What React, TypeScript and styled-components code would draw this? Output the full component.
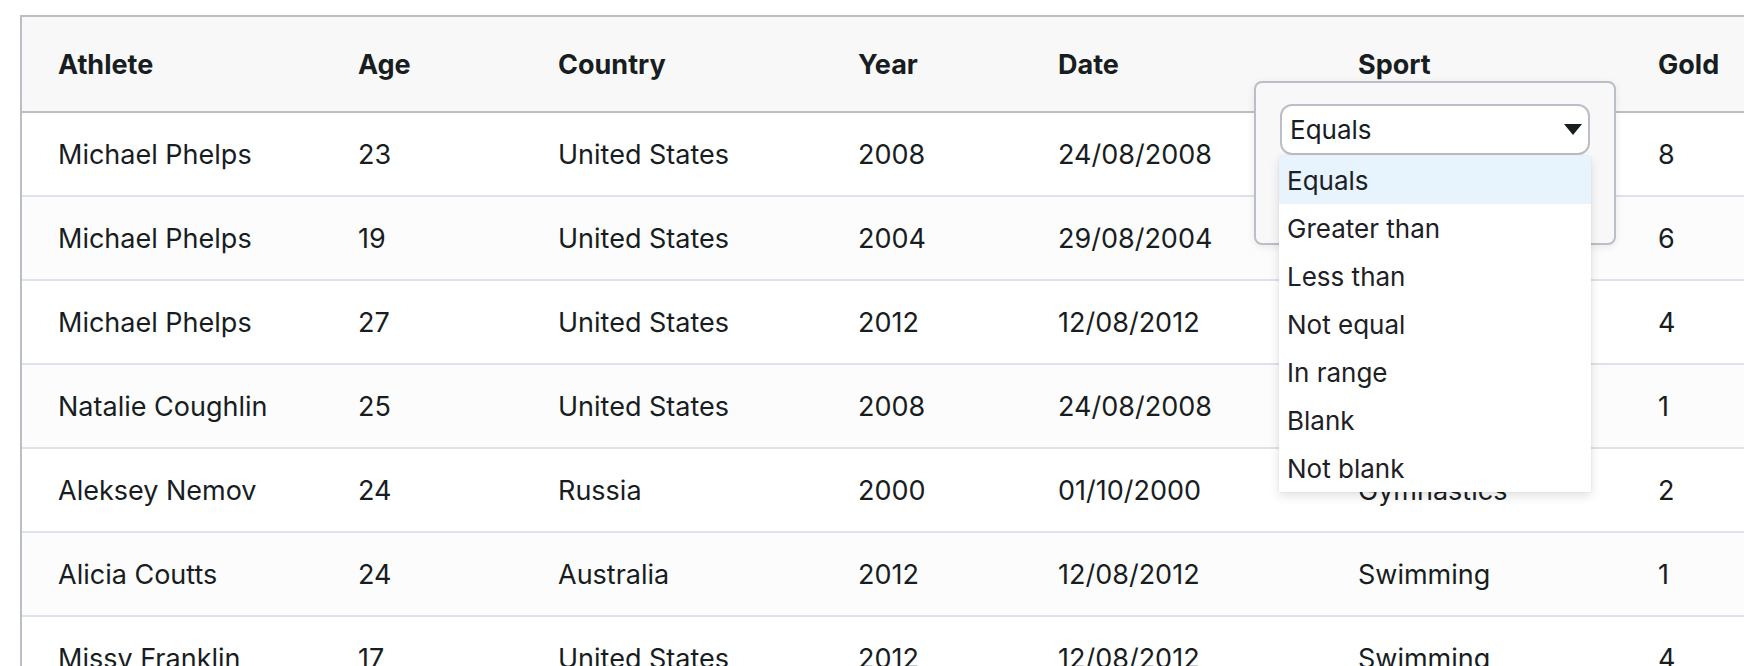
import styled, { createGlobalStyle } from "styled-components";

const GlobalStyle = createGlobalStyle`
  html, body {
    margin: 0;
    padding: 0;
    background: #ffffff;
    overflow: hidden;
  }
  body {
    font-family: Inter, "Noto Sans", "Liberation Sans", sans-serif;
    color: #181d1f;
  }
`;

const Page = styled.div`
  padding: 15px 0 0 20px;
  width: 1744px;
  height: 666px;
  box-sizing: border-box;
  overflow: hidden;
`;

const Grid = styled.div`
  position: relative;
  width: 1900px;
  border: 2px solid #babfc7;
  border-right: none;
  background: #ffffff;
`;

const HeaderRow = styled.div`
  display: flex;
  height: 94px;
  background: #f8f8f8;
  border-bottom: 2px solid #babfc7;
`;

const HeaderCell = styled.div<{ $w: number }>`
  display: flex;
  align-items: center;
  flex: 0 0 ${(p) => p.$w}px;
  padding-left: 36px;
  box-sizing: border-box;
  font-size: 27px;
  font-weight: 650;
  color: #181d1f;
`;

const Row = styled.div<{ $striped: boolean }>`
  display: flex;
  height: 82px;
  border-bottom: 2px solid #dde2eb;
  background: ${(p) => (p.$striped ? "#fcfcfc" : "#ffffff")};
`;

const Cell = styled.div<{ $w: number }>`
  display: flex;
  align-items: center;
  flex: 0 0 ${(p) => p.$w}px;
  padding-left: 36px;
  box-sizing: border-box;
  font-size: 27px;
  white-space: nowrap;
`;

const FilterPopup = styled.div`
  position: absolute;
  left: 1232px;
  top: 64px;
  width: 362px;
  height: 164px;
  box-sizing: border-box;
  padding: 21px 24px;
  background: #f8f8f8;
  border: 2px solid #babfc7;
  border-radius: 8px;
  box-shadow: 0 2px 8px rgba(0, 0, 0, 0.08);
  z-index: 5;
`;

const SelectWrap = styled.div`
  position: relative;
`;

const SelectBox = styled.div`
  display: flex;
  align-items: center;
  justify-content: space-between;
  height: 51px;
  box-sizing: border-box;
  padding: 0 6px 0 8px;
  background: #ffffff;
  border: 2px solid #babfc7;
  border-radius: 12px;
  font-size: 26px;
  color: #181d1f;
`;

const Caret = styled.svg`
  width: 18px;
  height: 11px;
  display: block;
`;

const OptionList = styled.ul`
  position: absolute;
  left: -1px;
  top: 52px;
  width: 312px;
  margin: 0;
  padding: 0;
  list-style: none;
  background: #ffffff;
  box-shadow: 0 4px 10px rgba(0, 0, 0, 0.12), 0 0 1px rgba(0, 0, 0, 0.12);
  z-index: 6;
`;

const OptionItem = styled.li<{ $active?: boolean }>`
  display: flex;
  align-items: center;
  height: 48px;
  padding-left: 8px;
  font-size: 26px;
  color: #1d2125;
  background: ${(p) => (p.$active ? "#e7f3fd" : "transparent")};
`;

const columns = [
  { key: "athlete", label: "Athlete", w: 300 },
  { key: "age", label: "Age", w: 200 },
  { key: "country", label: "Country", w: 300 },
  { key: "year", label: "Year", w: 200 },
  { key: "date", label: "Date", w: 300 },
  { key: "sport", label: "Sport", w: 300 },
  { key: "gold", label: "Gold", w: 200 },
] as const;

type Athlete = Record<(typeof columns)[number]["key"], string>;

const rows: Athlete[] = [
  { athlete: "Michael Phelps", age: "23", country: "United States", year: "2008", date: "24/08/2008", sport: "Swimming", gold: "8" },
  { athlete: "Michael Phelps", age: "19", country: "United States", year: "2004", date: "29/08/2004", sport: "Swimming", gold: "6" },
  { athlete: "Michael Phelps", age: "27", country: "United States", year: "2012", date: "12/08/2012", sport: "Swimming", gold: "4" },
  { athlete: "Natalie Coughlin", age: "25", country: "United States", year: "2008", date: "24/08/2008", sport: "Swimming", gold: "1" },
  { athlete: "Aleksey Nemov", age: "24", country: "Russia", year: "2000", date: "01/10/2000", sport: "Gymnastics", gold: "2" },
  { athlete: "Alicia Coutts", age: "24", country: "Australia", year: "2012", date: "12/08/2012", sport: "Swimming", gold: "1" },
  { athlete: "Missy Franklin", age: "17", country: "United States", year: "2012", date: "12/08/2012", sport: "Swimming", gold: "4" },
];

const options = ["Equals", "Greater than", "Less than", "Not equal", "In range", "Blank", "Not blank"];

export default function App() {
  return (
    <Page>
      <GlobalStyle />
      <Grid>
        <HeaderRow>
          {columns.map((c) => (
            <HeaderCell key={c.key} $w={c.w}>
              {c.label}
            </HeaderCell>
          ))}
        </HeaderRow>
        {rows.map((r, i) => (
          <Row key={i} $striped={i % 2 === 1}>
            {columns.map((c) => (
              <Cell key={c.key} $w={c.w}>
                {r[c.key]}
              </Cell>
            ))}
          </Row>
        ))}

        <FilterPopup>
          <SelectWrap>
            <SelectBox>
              <span>Equals</span>
              <Caret viewBox="0 0 18 11">
                <path d="M0 0 H18 L9 11 Z" fill="#181d1f" />
              </Caret>
            </SelectBox>
            <OptionList>
              {options.map((o, i) => (
                <OptionItem key={o} $active={i === 0}>
                  {o}
                </OptionItem>
              ))}
            </OptionList>
          </SelectWrap>
        </FilterPopup>
      </Grid>
    </Page>
  );
}
